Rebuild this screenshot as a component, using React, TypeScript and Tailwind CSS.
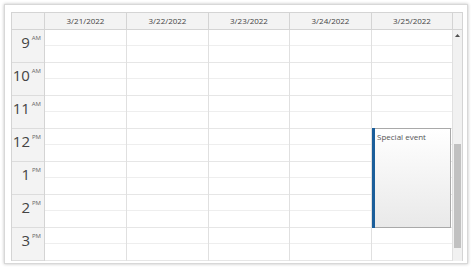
import React from "react";

const days = ["3/21/2022", "3/22/2022", "3/23/2022", "3/24/2022", "3/25/2022"];
const widths = ["w-[82px]", "w-[82px]", "w-[81px]", "w-[82px]", "w-[81px]"];
const hours: [string, string][] = [
  ["9", "AM"],
  ["10", "AM"],
  ["11", "AM"],
  ["12", "PM"],
  ["1", "PM"],
  ["2", "PM"],
  ["3", "PM"],
];

function DayColumn({ w, last }: { w: string; last: boolean }) {
  return (
    <div className={`${w} relative flex shrink-0 flex-col border-r border-[#e0e0e0]`}>
      {hours.map((h, i) => (
        <div key={i} className="flex flex-col">
          <div className="h-[16px] border-b border-[#eeeeee]" />
          <div className="h-[17px] border-b border-[#e6e6e6]" />
        </div>
      ))}
      {last && (
        <div className="absolute left-0 top-[98px] h-[100px] w-[79px] border border-[#a9a9a9] border-l-0 bg-gradient-to-b from-white to-[#e9e9e9]">
          <div className="absolute left-0 top-[-1px] bottom-[-1px] w-[3px] bg-[#1b5e9a]" />
          <div className="pl-[5px] pt-[2px] text-[8px] leading-[11px] text-[#555]">Special event</div>
        </div>
      )}
    </div>
  );
}

export default function App() {
  return (
    <div className="h-[270px] w-[474px] bg-white pl-[4px] pt-[4px]" style={{ fontFamily: '"Segoe UI", "Open Sans", "Noto Sans", sans-serif' }}>
      <div className="h-[260px] w-[464px] border border-[#d8d8d8] bg-white pl-[6px] pt-[7px] shadow-[0_0_3px_rgba(0,0,0,0.25)]">
        <div className="h-[249px] w-[452px] overflow-hidden border-l border-t border-[#d4d4d4]">
          {/* header */}
          <div className="flex h-[17px] border-b border-[#d4d4d4] bg-[#f3f3f3]">
            <div className="w-[33px] shrink-0 border-r border-[#d4d4d4]" />
            {days.map((d, i) => (
              <div key={d} className={`${widths[i]} flex shrink-0 items-center justify-center border-r border-[#d4d4d4] text-[8px] text-[#444]`}>
                {d}
              </div>
            ))}
            <div className="w-[10px] shrink-0 border-r border-[#d4d4d4]" />
          </div>
          {/* body */}
          <div className="flex">
            <div className="flex w-[33px] shrink-0 flex-col border-r border-[#d4d4d4] bg-[#f3f3f3]">
              {hours.map(([n, s]) => (
                <div key={n} className="flex h-[33px] items-start justify-end border-b border-[#dcdcdc] pr-[3px] pt-[4px]">
                  <span className="text-[15px] leading-[16px] text-[#444]">{n}</span>
                  <span className="ml-[2px] mt-[1px] text-[6px] leading-[7px] text-[#666]">{s}</span>
                </div>
              ))}
            </div>
            {days.map((d, i) => (
              <DayColumn key={d} w={widths[i]} last={i === 4} />
            ))}
            <div className="relative w-[10px] shrink-0 border-r border-[#d4d4d4] bg-[#f1f1f1]">
              <div className="flex h-[11px] items-center justify-center">
                <svg width="5" height="3" viewBox="0 0 5 3"><path d="M0 3 L2.5 0 L5 3 Z" fill="#505050" /></svg>
              </div>
              <div className="absolute left-[1px] top-[114px] h-[104px] w-[7px] bg-[#c1c1c1]" />
            </div>
          </div>
        </div>
      </div>
    </div>
  );
}
